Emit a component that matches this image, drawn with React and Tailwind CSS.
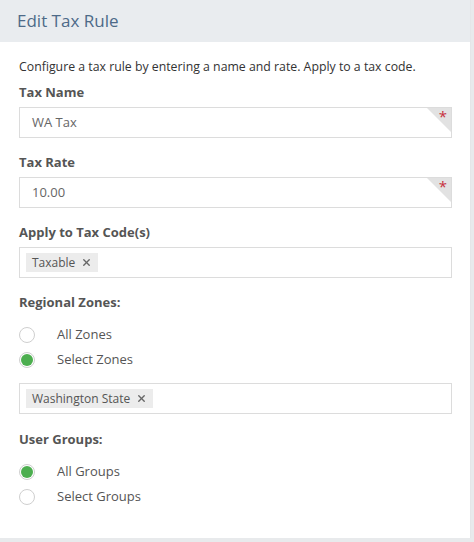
import { X } from 'lucide-react';

function Label({ children }) {
  return <p className="text-[13px] font-bold text-[#555] leading-[18px]">{children}</p>;
}

function RequiredInput({ value }) {
  return (
    <div className="relative h-[31px] border border-[#dcdcdc] bg-white flex items-center pl-3 text-[13px] text-[#666]">
      {value}
      <span className="absolute top-0 right-0 w-0 h-0 border-t-[24px] border-l-[24px] border-t-[#e2e2e2] border-l-transparent" />
      <span className="absolute top-[1px] right-[4px] text-[#c8303f] text-[15px] leading-none">*</span>
    </div>
  );
}

function TagInput({ tag }) {
  return (
    <div className="h-[31px] border border-[#dcdcdc] bg-white flex items-center px-[6px]">
      <span className="flex items-center gap-[6px] bg-[#ececec] h-[19px] px-[6px] text-[12px] text-[#555]">
        {tag}
        <X size={11} strokeWidth={3} className="text-[#666]" />
      </span>
    </div>
  );
}

function Radio({ label, checked }) {
  return (
    <label className="flex items-center h-[25px] text-[13px] text-[#555]">
      <span className="w-[16px] h-[16px] rounded-full border border-[#cfcfcf] bg-white flex items-center justify-center mr-[22px]">
        {checked && <span className="w-[12px] h-[12px] rounded-full bg-[#4cae4f]" />}
      </span>
      {label}
    </label>
  );
}

export default function App() {
  return (
    <div className="w-[474px] h-[542px] bg-[#e8eaec] font-['Open_Sans',sans-serif]">
      <section className="w-[471px] h-[538px] bg-white border-r border-[#e4e6e8]">
        <header className="h-[42px] bg-[#e9ecef] flex items-center pl-[17px]">
          <h1 className="text-[17px] text-[#4d6a88]">Edit Tax Rule</h1>
        </header>
        <div className="pl-[19px] pr-[18px] pt-[16px]">
          <p className="text-[12.3px] text-[#333] leading-[18px]">
            Configure a tax rule by entering a name and rate. Apply to a tax code.
          </p>
          <div className="mt-[7px] flex flex-col gap-[6px]">
            <Label>Tax Name</Label>
            <RequiredInput value="WA Tax" />
          </div>
          <div className="mt-[15px] flex flex-col gap-[6px]">
            <Label>Tax Rate</Label>
            <RequiredInput value="10.00" />
          </div>
          <div className="mt-[15px] flex flex-col gap-[6px]">
            <Label>Apply to Tax Code(s)</Label>
            <TagInput tag="Taxable" />
          </div>
          <div className="mt-[15px]">
            <Label>Regional Zones:</Label>
            <div className="mt-[11px] flex flex-col">
              <Radio label="All Zones" />
              <Radio label="Select Zones" checked />
            </div>
          </div>
          <div className="mt-[11px]">
            <TagInput tag="Washington State" />
          </div>
          <div className="mt-[16px]">
            <Label>User Groups:</Label>
            <div className="mt-[11px] flex flex-col">
              <Radio label="All Groups" checked />
              <Radio label="Select Groups" />
            </div>
          </div>
        </div>
      </section>
    </div>
  );
}
